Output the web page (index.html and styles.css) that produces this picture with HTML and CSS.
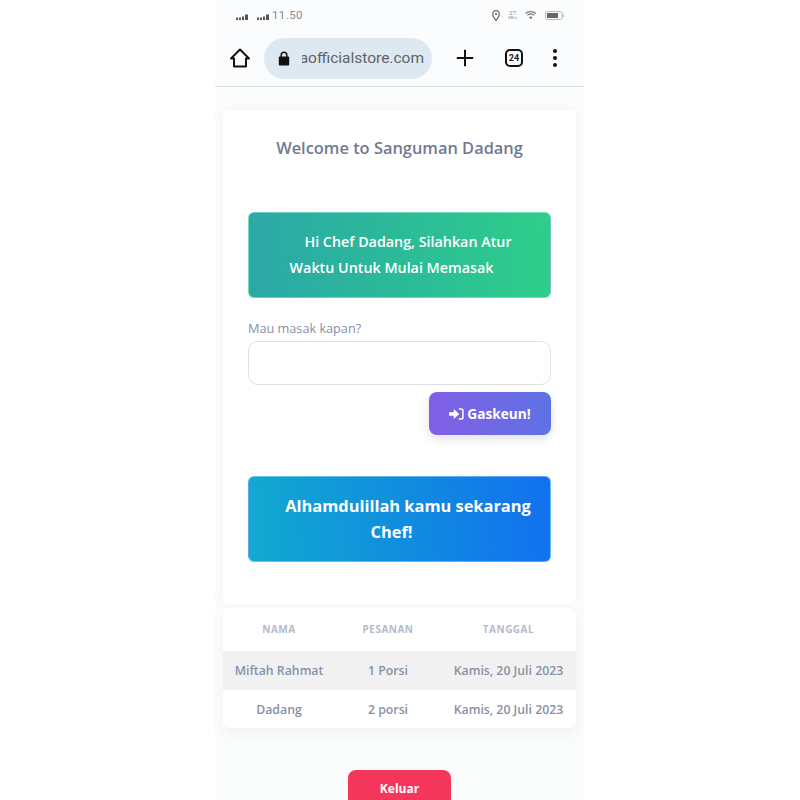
FILE: index.html
```html
<!DOCTYPE html>
<html lang="en">
<head>
  <meta charset="UTF-8" />
  <title>Sanguman Dadang</title>
  <link rel="stylesheet" href="styles.css">
</head>
<body>
  <div class="phone">

    <div class="status-bar">
      <div class="status-left">
        <svg width="13" height="6" viewBox="0 0 13 6"><path d="M0 3.500h2V6H0zM3 3.500h2V6H3zM6 2.500h2V6H6zM9 .5h3V6H9z" fill="#555"/></svg>
        <svg class="signal-two" width="13" height="6" viewBox="0 0 13 6"><path d="M0 3.500h2V6H0zM3 3.500h2V6H3zM6 2.500h2V6H6zM9 .5h3V6H9z" fill="#555"/></svg>
        <span class="clock">11.50</span>
      </div>
      <div class="status-right">
        <svg width="8" height="11" viewBox="0 0 8 11"><path d="M4 .7a3.300 3.300 0 0 0-3.300 3.300C.7 6.500 4 10.300 4 10.300S7.300 6.500 7.300 4A3.300 3.300 0 0 0 4 .7z" fill="none" stroke="#666" stroke-width="1.200"/><circle cx="4" cy="4" r="1.100" fill="#666"/></svg>
        <span class="speed">27<small>KB/s</small></span>
        <svg width="12" height="9" viewBox="0 0 12 9"><path d="M.5 2.500C3.500 0 8 0 11 2.500M2.300 4.300c2.200-1.600 5-1.600 7.200 0" fill="none" stroke="#888" stroke-width="1.300"/><path d="M4 6c1-.8 2.500-.8 3.500 0L5.800 8.500z" fill="#777"/></svg>
        <svg width="19" height="9" viewBox="0 0 19 9"><rect x=".5" y=".5" width="16.500" height="8" rx="1.500" fill="none" stroke="#bbb"/><rect x="2" y="2" width="11" height="5" fill="#666"/><rect x="17.500" y="3" width="1.200" height="3" fill="#bbb"/></svg>
      </div>
    </div>

    <div class="toolbar">
      <svg class="home-icon" width="22" height="22" viewBox="0 0 22 22"><path d="M2 11.500 11 2.500l9 9h-3v8H5v-8z" fill="none" stroke="#111" stroke-width="2" stroke-linejoin="round"/></svg>
      <div class="url-pill">
        <svg width="12" height="15" viewBox="0 0 12 15"><path d="M3.200 6V4a2.800 2.800 0 0 1 5.600 0v2" fill="none" stroke="#111" stroke-width="1.500"/><rect x=".8" y="5.500" width="10.400" height="9" rx="1" fill="#111"/></svg>
        <span class="url-text">aofficialstore.com</span>
      </div>
      <svg class="plus-icon" width="18" height="18" viewBox="0 0 18 18"><path d="M9 .8v16.400M.8 9h16.400" stroke="#111" stroke-width="2"/></svg>
      <div class="tab-count">24</div>
      <div class="dots"><i></i><i></i><i></i></div>
    </div>

    <div class="card">
      <h3 class="card-title">Welcome to Sanguman Dadang</h3>

      <div class="alert alert-green">
        <span class="alert-icon"></span>Hi Chef Dadang, Silahkan Atur Waktu Untuk Mulai Memasak
      </div>

      <label class="field-label" for="waktu">Mau masak kapan?</label>
      <input class="field-input" id="waktu" type="text" />

      <div class="btn-row">
        <button class="btn-go">
          <svg width="15" height="12" viewBox="0 0 16 13"><path d="M0 4.500h5V1l6 5.500L5 12V8.500H0z" fill="#fff"/><path d="M10.500 1H13a2 2 0 0 1 2 2v7a2 2 0 0 1-2 2h-2.500" fill="none" stroke="#fff" stroke-width="1.600"/></svg>
          Gaskeun!
        </button>
      </div>

      <div class="alert alert-blue">
        <span class="alert-icon"></span>Alhamdulillah kamu sekarang Chef!
      </div>
    </div>

    <div class="table-card">
      <table>
        <thead>
          <tr><th class="col-nama">Nama</th><th class="col-pesanan">Pesanan</th><th>Tanggal</th></tr>
        </thead>
        <tbody>
          <tr class="row-grey"><td>Miftah Rahmat</td><td>1 Porsi</td><td>Kamis, 20 Juli 2023</td></tr>
          <tr><td>Dadang</td><td>2 porsi</td><td>Kamis, 20 Juli 2023</td></tr>
        </tbody>
      </table>
    </div>

    <div class="logout-row">
      <button class="btn-logout">Keluar</button>
    </div>

  </div>
</body>
</html>
```

FILE: styles.css
```css
* { box-sizing: border-box; margin: 0; padding: 0; }
html, body { height: 800px; overflow: hidden; }

body {
  font-family: 'Open Sans', sans-serif;
  background: #fff;
  padding-left: 215px;
}

.phone {
  width: 369px;
  height: 800px;
  background: #fbfcfc;
  overflow: hidden;
}

/* status bar */
.status-bar {
  height: 30px;
  padding: 0 20px 0 21px;
  display: flex;
  align-items: center;
  justify-content: space-between;
  background: #fbfcfe;
}

.status-left, .status-right {
  display: flex;
  align-items: center;
}

.status-left svg { margin-top: 3px; }
.signal-two { margin-left: 8px; }

.clock {
  font-family: 'Roboto', sans-serif;
  font-size: 11.500px;
  color: #8a8a8a;
  letter-spacing: 0.4px;
  margin-left: 2px;
}

.status-right { gap: 8px; }

.speed {
  display: flex;
  flex-direction: column;
  align-items: center;
  font-family: 'Roboto', sans-serif;
  font-size: 6px;
  line-height: 5px;
  color: #888;
}

.speed small { font-size: 4px; }

/* browser toolbar */
.toolbar {
  height: 57px;
  padding: 0 22px 0 14px;
  display: flex;
  align-items: center;
  background: #fbfcfe;
  border-bottom: 1px solid #dfe2e6;
}

.url-pill {
  width: 168px;
  height: 41px;
  margin-left: 13px;
  padding-left: 14px;
  display: flex;
  align-items: center;
  gap: 12px;
  background: #dde8f0;
  border-radius: 21px;
  overflow: hidden;
}

/* the host name is cut off at its start, like the address bar does */
.url-text {
  width: 122px;
  overflow: hidden;
  direction: rtl;
  font-family: 'Roboto', sans-serif;
  font-size: 15.500px;
  color: #5f6368;
  white-space: nowrap;
}

.plus-icon { margin-left: 24px; }

.tab-count {
  width: 18px;
  height: 18px;
  margin-left: 31px;
  border: 2px solid #111;
  border-radius: 5px;
  font-family: 'Roboto', sans-serif;
  font-size: 9px;
  font-weight: 700;
  line-height: 14px;
  text-align: center;
  color: #222;
}

.dots {
  margin-left: 30px;
  display: flex;
  flex-direction: column;
  gap: 3px;
}

.dots i {
  display: block;
  width: 4px;
  height: 4px;
  background: #111;
  border-radius: 50%;
}

/* main card */
.card {
  height: 494px;
  margin: 23px 8px 0;
  padding: 26px 25px 0;
  background: #fff;
  border-radius: 6px;
  box-shadow: 0 0 12px rgba(136,152,170,0.08);
}

.card-title {
  font-size: 16.400px;
  font-weight: 600;
  line-height: 24px;
  text-align: center;
  color: #6f7a91;
  margin-bottom: 52px;
}

.alert {
  height: 86px;
  padding: 16px 19px 0 3px;
  border: 1px solid rgba(255,255,255,0.35);
  border-radius: 6px;
  color: #fff;
  text-align: center;
  line-height: 26px;
}

.alert-icon {
  display: inline-block;
  width: 33px;
}

.alert-green {
  background: linear-gradient(87deg, #2ba7a8, #2dce89);
  font-size: 14.300px;
  font-weight: 600;
}

.alert-blue {
  margin-top: 41px;
  background: linear-gradient(87deg, #11aacf, #1171ef);
  font-size: 16.400px;
  font-weight: 700;
}

.field-label {
  display: block;
  margin-top: 22px;
  font-size: 12.700px;
  line-height: 17px;
  color: #8590a6;
}

.field-input {
  display: block;
  width: 100%;
  height: 44px;
  margin-top: 4px;
  background: #fff;
  border: 1px solid #dcdfe3;
  border-radius: 10px;
}

.btn-row {
  display: flex;
  justify-content: flex-end;
  margin-top: 7px;
}

.btn-go {
  width: 122px;
  height: 43px;
  display: flex;
  align-items: center;
  justify-content: center;
  gap: 3px;
  background: linear-gradient(87deg, #825ee4, #5e72e4);
  color: #fff;
  border: none;
  border-radius: 8px;
  font-family: 'Open Sans', sans-serif;
  font-size: 13.700px;
  font-weight: 700;
  box-shadow: 0 4px 8px rgba(50,50,93,0.14);
}

/* table */
.table-card {
  margin: 4px 8px 0;
  background: #fff;
  border-radius: 6px;
  overflow: hidden;
  box-shadow: 0 6px 14px rgba(136,152,170,0.1);
}

table {
  width: 100%;
  border-collapse: collapse;
  table-layout: fixed;
}

th {
  height: 43px;
  font-size: 10px;
  font-weight: 700;
  text-transform: uppercase;
  letter-spacing: 0.5px;
  color: #b3bbca;
}

td {
  height: 38.500px;
  font-size: 12.300px;
  font-weight: 600;
  text-align: center;
  color: #8791a5;
  border-top: 1px solid #eff1f3;
}

.col-nama { width: 112px; }
.col-pesanan { width: 106px; }
.row-grey td { background: #f1f1f2; }

/* logout */
.logout-row {
  margin-top: 42px;
  display: flex;
  justify-content: center;
}

.btn-logout {
  width: 103px;
  height: 40px;
  padding-bottom: 3px;
  background: #f5365c;
  color: #fff;
  border: none;
  border-radius: 8px;
  font-family: 'Open Sans', sans-serif;
  font-size: 12px;
  font-weight: 700;
}
```
